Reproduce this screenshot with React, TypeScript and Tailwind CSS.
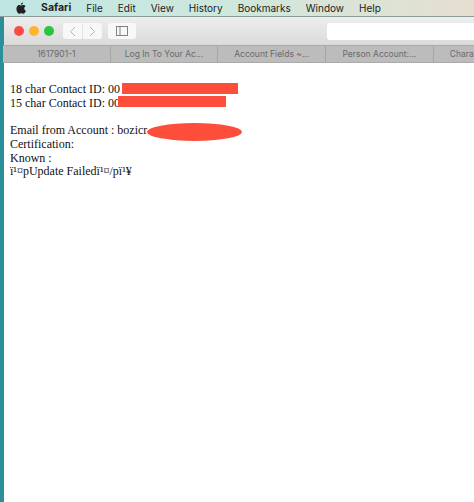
import React from 'react';

const menus = ['File', 'Edit', 'View', 'History', 'Bookmarks', 'Window', 'Help'];
const tabs = ['1617901-1', 'Log In To Your Ac...', 'Account Fields ~...', 'Person Account:...'];

const AppleLogo = () => (
  <svg width="10" height="12" viewBox="0 0 24 28" fill="#222">
    <path d="M17 1c.2 2.300-2 5.600-5.300 5.500C11.400 4 14 1.200 17 1zM12 8.300c1.300 0 3-1.500 5.500-1.500 2.200 0 4.300 1.100 5.500 3-4.600 2.700-3.900 9 1 10.900-1.400 3.300-3.900 7.300-6.300 7.300-1.900 0-2.500-1.200-4.800-1.200s-3 1.200-4.800 1.200C4.700 27.900 1 21.500 1 15.800c0-5.600 3.500-8.900 7-8.900 1.900 0 3.300 1.400 4 1.400z" />
  </svg>
);

export default function App() {
  return (
    <div className="h-[502px] w-[474px] overflow-hidden flex bg-white font-['Liberation_Serif',serif]">
      <div className="w-[4px] shrink-0 bg-[#2a8f99]" />
      <div className="flex-1 min-w-0 flex flex-col">
        {/* Menu bar */}
        <div className="h-[17px] -ml-[4px] pl-[16px] flex items-center gap-[15px] bg-gradient-to-r from-[#bfe6e4] via-[#cfe8dc] to-[#e6dfd0] text-[10px] text-[#222] font-['Inter',sans-serif] border-b border-[#8c9a98]">
          <AppleLogo />
          <span className="font-bold text-[10.500px]">Safari</span>
          {menus.map((m) => (
            <span key={m}>{m}</span>
          ))}
        </div>

        {/* Toolbar */}
        <div className="h-[28px] flex items-center bg-gradient-to-b from-[#eeeeee] to-[#dadada] pl-[10px]">
          <span className="w-[10px] h-[10px] rounded-full bg-[#fb4d48]" />
          <span className="w-[10px] h-[10px] rounded-full bg-[#fdb52f] ml-[5px]" />
          <span className="w-[10px] h-[10px] rounded-full bg-[#29c53f] ml-[5px]" />
          <div className="ml-[9px] flex gap-px">
            <div className="w-[19px] h-[16px] rounded-l-[3px] bg-[#f8f8f8] flex items-center justify-center">
              <svg width="7" height="11" viewBox="0 0 7 11" fill="none" stroke="#b5b5b5" strokeWidth="1">
                <path d="M6 1 1.500 5.500 6 10" />
              </svg>
            </div>
            <div className="w-[19px] h-[16px] rounded-r-[3px] bg-[#f8f8f8] flex items-center justify-center">
              <svg width="7" height="11" viewBox="0 0 7 11" fill="none" stroke="#b5b5b5" strokeWidth="1">
                <path d="M1 1 5.500 5.500 1 10" />
              </svg>
            </div>
          </div>
          <div className="ml-[6px] w-[28px] h-[16px] rounded-[3px] bg-[#f8f8f8] flex items-center justify-center">
            <svg width="12" height="10" viewBox="0 0 12 10" fill="none" stroke="#777" strokeWidth="0.9">
              <rect x="0.500" y="0.500" width="11" height="9" />
              <path d="M4 .5v9" />
            </svg>
          </div>
          <div className="ml-auto w-[147px] h-[17px] rounded-l-[3px] bg-white" />
        </div>

        {/* Tabs */}
        <div className="h-[18px] -ml-px flex bg-[#bcbcbc] border-y border-[#aaaaaa] text-[8.500px] text-[#6a6a6a] font-['Inter',sans-serif]">
          {tabs.map((t) => (
            <div key={t} className="w-[107.700px] shrink-0 flex items-center justify-center border-r border-[#a5a5a5]">
              {t}
            </div>
          ))}
          <div className="flex-1 pl-[16px] flex items-center">Chara</div>
        </div>

        {/* Page */}
        <div className="pl-[6px] pt-[20px] text-[12px] leading-[13.700px] text-[#111]">
          <div className="flex">
            <span>18 char Contact ID: 00</span>
            <span className="relative">
              <span className="absolute left-[2px] top-0 w-[116px] h-[11px] bg-[#fc4e3a]" />
            </span>
          </div>
          <div className="flex">
            <span>15 char Contact ID: 00</span>
            <span className="relative">
              <span className="absolute left-[-2px] top-[-1px] w-[108px] h-[11px] bg-[#fc4e3a]" />
            </span>
          </div>
          <div className="h-[13.700px]" />
          <div className="flex">
            <span>Email from Account : bozicr</span>
            <span className="relative">
              <span className="absolute left-0 top-[-1px] w-[95px] h-[18px] rounded-[50%] bg-[#fc4e3a]" />
            </span>
          </div>
          <div>Certification:</div>
          <div>Known :</div>
          <div>ï¹¤pUpdate Failedï¹¤/pï¹¥</div>
        </div>
      </div>
    </div>
  );
}
